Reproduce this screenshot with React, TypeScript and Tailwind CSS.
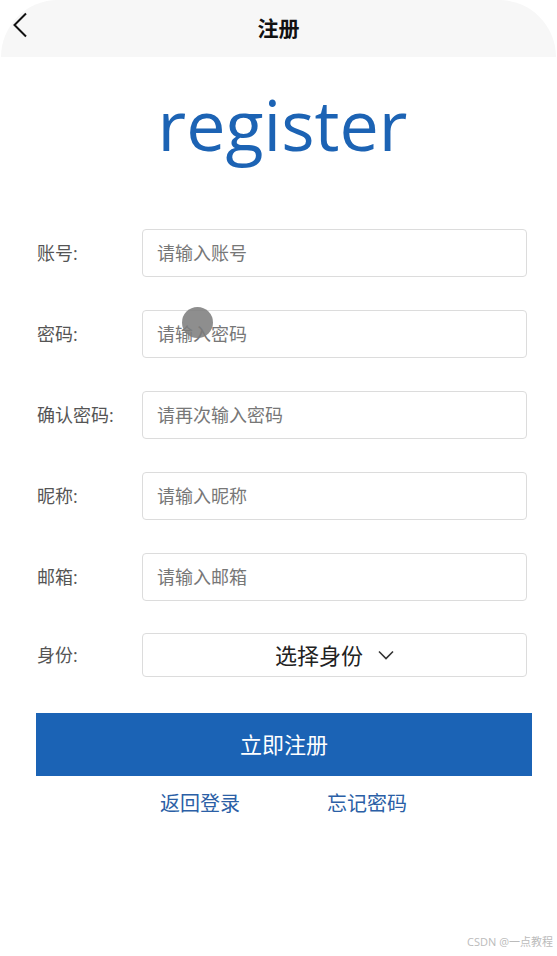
import React from "react";

const fields = [
  { label: "账号:", placeholder: "请输入账号" },
  { label: "密码:", placeholder: "请输入密码" },
  { label: "确认密码:", placeholder: "请再次输入密码" },
  { label: "昵称:", placeholder: "请输入昵称" },
  { label: "邮箱:", placeholder: "请输入邮箱" },
];

const cjk = { fontFamily: '"Open Sans", "Noto Sans CJK SC", sans-serif' };

export default function App() {
  return (
    <div className="relative w-[557px] h-[956px] bg-white overflow-hidden" style={cjk}>
      {/* header */}
      <div className="relative flex h-[57px] items-center justify-center rounded-t-[60px] bg-[#f7f7f7] mx-[1px]">
        <svg
          className="absolute left-[11px] top-[12px]"
          width="16"
          height="26"
          viewBox="0 0 16 26"
          fill="none"
          stroke="#111"
          strokeWidth="2"
        >
          <path d="M14 1.5 L2.5 13 L14 24.5" />
        </svg>
        <span className="text-[21px] font-bold text-[#111] leading-none">注册</span>
      </div>

      {/* logo */}
      <div className="flex justify-center pt-[22px] pl-[8px] h-[172px]">
        <span className="text-[70px] leading-[90px] text-[#1c63b4]">register</span>
      </div>

      {/* form */}
      <div className="flex flex-col gap-[33px] pl-[37px] pr-[30px]">
        {fields.map((f) => (
          <div key={f.label} className="flex items-center">
            <span className="w-[105px] text-[18px] text-[#555]">{f.label}</span>
            <div className="flex h-[48px] flex-1 items-center rounded-[4px] border border-[#dcdcdc] px-[14px] text-[18px] text-[#777]">
              {f.placeholder}
            </div>
          </div>
        ))}
        <div className="flex items-center -mt-[1px]">
          <span className="w-[105px] text-[18px] text-[#555]">身份:</span>
          <div className="flex h-[44px] flex-1 items-center justify-center gap-[15px] rounded-[4px] border border-[#dcdcdc] text-[22px] text-[#222]">
            <span>选择身份</span>
            <svg width="16" height="10" viewBox="0 0 16 10" fill="none" stroke="#333" strokeWidth="1.6">
              <path d="M1 1.5 L8 8.5 L15 1.5" />
            </svg>
          </div>
        </div>
      </div>

      <div className="pl-[36px] pr-[25px] pt-[36px]">
        <div className="flex h-[63px] items-center justify-center bg-[#1b63b5] text-[22px] text-white">
          立即注册
        </div>
        <div className="flex pt-[13px] text-[20px] text-[#2b5fa6]">
          <span className="ml-[124px]">返回登录</span>
          <span className="ml-[87px]">忘记密码</span>
        </div>
      </div>

      {/* touch indicator */}
      <div className="absolute left-[182px] top-[307px] h-[31px] w-[31px] rounded-full bg-[#7a7a7a]/85" />

      {/* watermark */}
      <div className="absolute right-[4px] bottom-[6px] text-[11px] text-[#bbb]">CSDN @一点教程</div>
    </div>
  );
}
